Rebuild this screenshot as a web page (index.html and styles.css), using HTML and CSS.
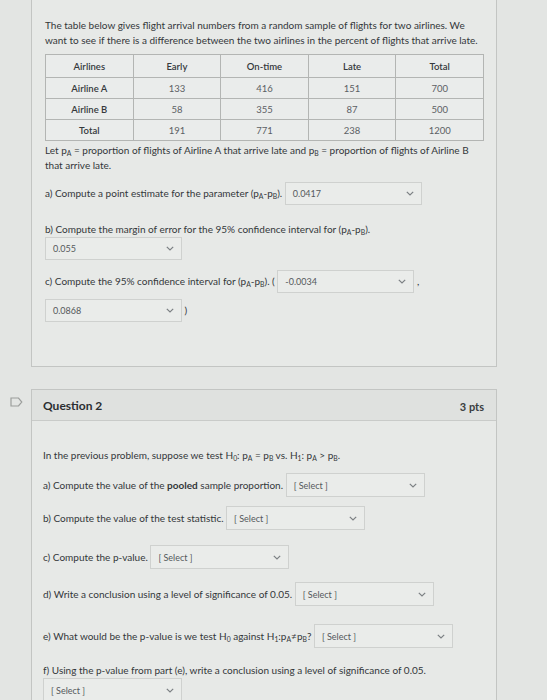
FILE: index.html
```html
<!DOCTYPE html>
<html lang="en">
<head>
<meta charset="utf-8">
<title>Quiz</title>
<link rel="stylesheet" href="styles.css">
</head>
<body>
<div class="page">
  <div class="qrow">
    <div class="gutter"></div>
    <section class="card card-open">
      <div class="card-body body-1">
        <p class="text">The table below gives flight arrival numbers from a random sample of flights for two airlines. We<br>want to see if there is a difference between the two airlines in the percent of flights that arrive late.</p>
        <table class="data">
          <thead>
            <tr><th>Airlines</th><th>Early</th><th>On-time</th><th>Late</th><th>Total</th></tr>
          </thead>
          <tbody>
            <tr><th>Airline A</th><td>133</td><td>416</td><td>151</td><td>700</td></tr>
            <tr><th>Airline B</th><td>58</td><td>355</td><td>87</td><td>500</td></tr>
            <tr><th>Total</th><td>191</td><td>771</td><td>238</td><td>1200</td></tr>
          </tbody>
        </table>
        <p class="text def">Let p<sub>A</sub> = proportion of flights of Airline A that arrive late and p<sub>B</sub> = proportion of flights of Airline B<br>that arrive late.</p>
        <p class="text line q1a">a) Compute a point estimate for the parameter (p<sub>A</sub>-p<sub>B</sub>). <span class="select"><span class="val">0.0417</span><svg class="chev" viewBox="0 0 8 5"><path d="M0.8 0.8L4 4L7.2 0.8"/></svg></span></p>
        <p class="text q1b">b) Compute the margin of error for the 95% confidence interval for (p<sub>A</sub>-p<sub>B</sub>).</p>
        <div class="line"><span class="select"><span class="val">0.055</span><svg class="chev" viewBox="0 0 8 5"><path d="M0.8 0.8L4 4L7.2 0.8"/></svg></span></div>
        <p class="text line q1c">c) Compute the 95% confidence interval for (p<sub>A</sub>-p<sub>B</sub>). ( <span class="select"><span class="val">-0.0034</span><svg class="chev" viewBox="0 0 8 5"><path d="M0.8 0.8L4 4L7.2 0.8"/></svg></span> ,</p>
        <p class="text line q1c2"><span class="select"><span class="val">0.0868</span><svg class="chev" viewBox="0 0 8 5"><path d="M0.8 0.8L4 4L7.2 0.8"/></svg></span> )</p>
      </div>
    </section>
  </div>

  <div class="qrow qrow-2">
    <div class="gutter">
      <svg class="flag" viewBox="0 0 13 10"><path d="M1 1H8.5L11.8 5L8.5 9H1Z"/></svg>
    </div>
    <section class="card">
      <header class="card-head">
        <h2 class="q-title">Question 2</h2>
        <span class="pts">3 pts</span>
      </header>
      <div class="card-body body-2">
        <p class="text">In the previous problem, suppose we test H<sub>0</sub>: p<sub>A</sub> = p<sub>B</sub> vs. H<sub>1</sub>: p<sub>A</sub> &gt; p<sub>B</sub>.</p>
        <p class="text line q2a">a) Compute the value of the <b>pooled</b> sample proportion. <span class="select"><span class="val">[ Select ]</span><svg class="chev" viewBox="0 0 8 5"><path d="M0.8 0.8L4 4L7.2 0.8"/></svg></span></p>
        <p class="text line q2b">b) Compute the value of the test statistic. <span class="select"><span class="val">[ Select ]</span><svg class="chev" viewBox="0 0 8 5"><path d="M0.8 0.8L4 4L7.2 0.8"/></svg></span></p>
        <p class="text line q2c">c) Compute the p-value. <span class="select"><span class="val">[ Select ]</span><svg class="chev" viewBox="0 0 8 5"><path d="M0.8 0.8L4 4L7.2 0.8"/></svg></span></p>
        <p class="text line q2d">d) Write a conclusion using a level of significance of 0.05. <span class="select"><span class="val">[ Select ]</span><svg class="chev" viewBox="0 0 8 5"><path d="M0.8 0.8L4 4L7.2 0.8"/></svg></span></p>
        <p class="text line q2e">e) What would be the p-value is we test H<sub>0</sub> against H<sub>1</sub>:p<sub>A</sub>&ne;p<sub>B</sub>? <span class="select"><span class="val">[ Select ]</span><svg class="chev" viewBox="0 0 8 5"><path d="M0.8 0.8L4 4L7.2 0.8"/></svg></span></p>
        <p class="text q2f">f) Using the p-value from part (e), write a conclusion using a level of significance of 0.05.</p>
        <div class="line q2f-sel"><span class="select"><span class="val">[ Select ]</span><svg class="chev" viewBox="0 0 8 5"><path d="M0.8 0.8L4 4L7.2 0.8"/></svg></span></div>
      </div>
    </section>
  </div>
</div>
</body>
</html>
```

FILE: styles.css
```css
* { box-sizing: border-box; }

html, body {
  margin: 0;
  padding: 0;
  background: #e3e5e3;
}

body {
  font-family: Lato, "Open Sans", "Liberation Sans", sans-serif;
  font-size: 10px;
  line-height: 15px;
  color: #33373a;
  overflow: hidden;
  height: 700px;
}

.page {
  width: 547px;
}

.qrow {
  display: flex;
}

.qrow-2 {
  margin-top: 22px;
}

.gutter {
  width: 31px;
  flex: none;
  position: relative;
}

.flag {
  position: absolute;
  left: 10px;
  top: 8px;
  width: 13px;
  height: 10px;
}

.flag path {
  fill: none;
  stroke: #9c9e9c;
  stroke-width: 1.2;
}

.card {
  width: 466px;
  flex: none;
  border: 1px solid #c3c5c3;
  background: #e7e9e7;
}

.card-open {
  border-top: none;
}

.card-head {
  height: 31px;
  display: flex;
  align-items: center;
  justify-content: space-between;
  padding: 0 12px 0 11px;
  background: #dfe1df;
  border-bottom: 1px solid #c9cbc9;
}

.q-title {
  margin: 0;
  font-size: 12px;
  font-weight: 700;
  color: #2b2e31;
}

.pts {
  font-size: 11px;
  font-weight: 700;
  color: #3a3d40;
  margin-top: 3px;
}

.card-body {
  padding: 0 10px 0 13px;
}

.body-1 {
  padding-top: 18px;
  padding-bottom: 44px;
}

.body-2 {
  padding-top: 27px;
  padding-left: 11px;
  height: 300px;
}

.text {
  margin: 0;
  white-space: nowrap;
}

sub {
  font-size: 0.68em;
  line-height: 0;
  vertical-align: -0.3em;
}

.data {
  margin-top: 6px;
  width: 439px;
  border-collapse: collapse;
  table-layout: fixed;
  background: #eaeceb;
}

.data th,
.data td {
  border: 1px solid #b3b5b3;
  text-align: center;
  padding: 0;
  height: 21px;
  font-size: 9.5px;
}

.data thead th {
  height: 23px;
}

.data th {
  font-weight: 600;
  color: #35393c;
}

.data td {
  font-weight: 400;
  color: #5c6064;
}

.def {
  margin-top: 2px;
}

.select {
  display: inline-flex;
  align-items: center;
  justify-content: space-between;
  width: 137px;
  height: 23px;
  padding: 0 7px 0 7px;
  border: 1px solid #cfd1cf;
  background: #eaecea;
  color: #55595c;
  font-size: 9px;
}

.chev {
  width: 8px;
  height: 5px;
}

.chev path {
  fill: none;
  stroke: #7c8084;
  stroke-width: 1.2;
}

.q1a { margin-top: 9px; }
.q1b { margin-top: 17px; }
.q1c { margin-top: 10px; }
.q1c2 { margin-top: 6px; }

.body-2 .select {
  height: 24px;
  width: 139px;
}

.q2a { margin-top: 10px; }
.q2b { margin-top: 9px; }
.q2c { margin-top: 15px; }
.q2d { margin-top: 13px; }
.q2e { margin-top: 18px; }
.q2f { margin-top: 15px; }
.q2f-sel { margin-top: 0; }
```
